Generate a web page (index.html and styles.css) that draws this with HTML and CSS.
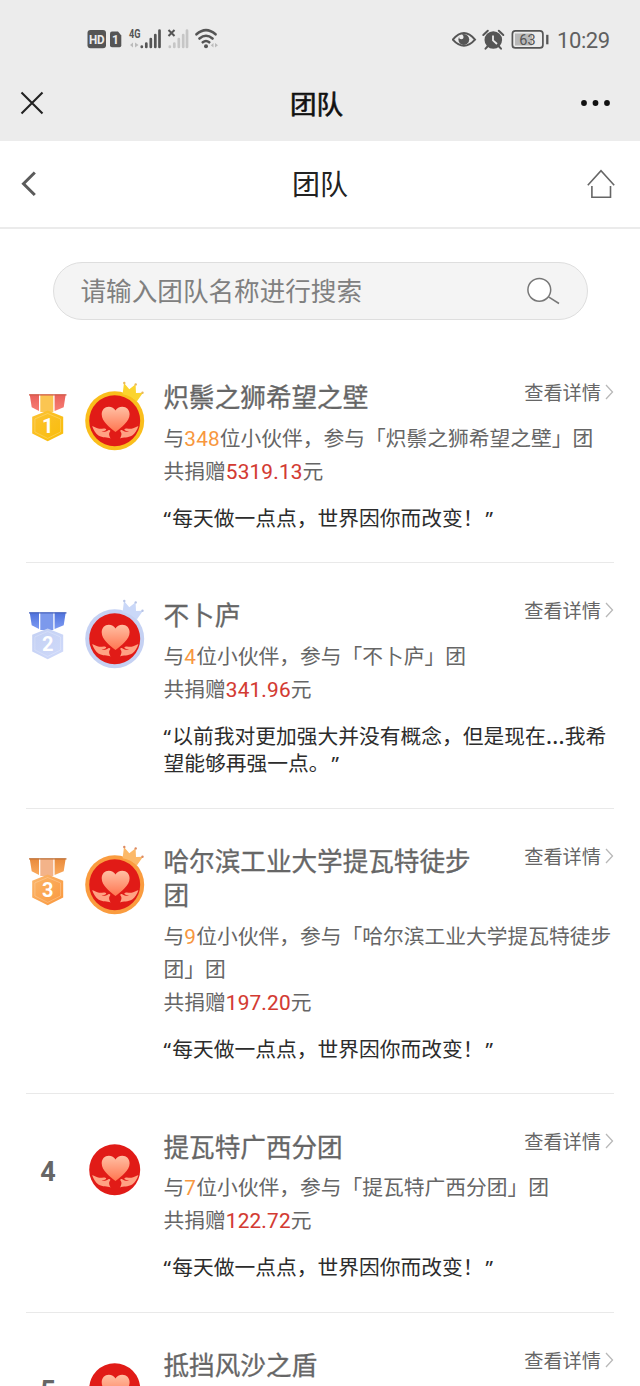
FILE: index.html
```html
<!DOCTYPE html>
<html lang="zh-CN">
<head>
<meta charset="utf-8">
<meta name="viewport" content="width=device-width">
<title>团队</title>
<link rel="stylesheet" href="styles.css">
</head>
<body>
<svg class="defs" width="0" height="0" aria-hidden="true">
  <defs>
    <linearGradient id="heartFill" x1="0" y1="0" x2="0" y2="1"><stop offset="0" stop-color="#ffc0a4"/><stop offset="1" stop-color="#ff7550"/></linearGradient>
    <linearGradient id="gold" x1="0" y1="0" x2="1" y2="1"><stop offset="0" stop-color="#fcc234"/><stop offset="1" stop-color="#f9bd08"/></linearGradient>
    <linearGradient id="silver" x1="0" y1="0" x2="1" y2="1"><stop offset="0" stop-color="#c3d0f3"/><stop offset="1" stop-color="#d0dafa"/></linearGradient>
    <linearGradient id="bronze" x1="0" y1="0" x2="1" y2="1"><stop offset="0" stop-color="#fbb66c"/><stop offset="1" stop-color="#fa983d"/></linearGradient>
    <linearGradient id="ribbon1" x1="0" y1="0" x2="0" y2="1"><stop offset="0" stop-color="#e9605a"/><stop offset="1" stop-color="#f77d74"/></linearGradient>
    <linearGradient id="ribbon2" x1="0" y1="0" x2="0" y2="1"><stop offset="0" stop-color="#4f72dc"/><stop offset="1" stop-color="#7d9af2"/></linearGradient>
    <linearGradient id="ribbon3" x1="0" y1="0" x2="0" y2="1"><stop offset="0" stop-color="#e88a3c"/><stop offset="1" stop-color="#fbaa5c"/></linearGradient>
    <g id="badge">
      <circle cx="30.700" cy="40.700" r="25.500" fill="#e11b17"/>
      <path d="M31.500 52C25.500 47.500 17.700 41.500 17.700 34.300C17.700 29.800 20.800 26.700 24.800 26.700C27.700 26.700 30.200 28.200 31.500 30.600C32.800 28.200 35.300 26.700 38.300 26.700C42.500 26.700 45.600 29.800 45.600 34.300C45.600 41.500 37.500 47.500 31.500 52Z" fill="url(#heartFill)"/>
      <path id="hand" d="M8.200 46.300C9.500 45.600 12.500 48.600 15.200 48.800C17.500 49 19.500 48.200 21.400 48.800C23 49.500 21.800 50.800 20.200 51L17.600 51.500C20 52.300 22.200 51.700 24 50.400C25.600 49.300 27 50.400 26 51.700C25 53 24.500 54.500 26.600 58.600C23.500 57 18.500 58 14.400 55.500C11.500 53.500 9.500 50 8.200 46.300Z" fill="#ffa283"/>
      <use href="#hand" transform="translate(62.600 0) scale(-1 1)"/>
    </g>
    <path id="crown" d="M38.600 14.200L40 3L45.300 9.300L51.600 4.200L52 13L59 12.800L52.800 21.500Q47 15.500 38.600 14.200Z"/>
    <path id="ribbonSide" d="M3.700 14.500H13V31L5.700 27.200ZM28.600 14.500H39.700L37.700 27.200L28.600 31Z"/>
    <path id="hex" d="M21.700 30.500L37.200 36.800V53.500L21.700 61.200L6.200 53.500V36.800Z"/>
    <path id="hexInner" d="M21.700 33.500L34.500 38.900V52L21.700 58.400L8.900 52V38.900Z" fill="none" stroke="#fff" stroke-opacity=".22"/>
  </defs>
</svg>

<header class="app-header">
  <div class="status-bar">
    <svg class="status-left" width="134" height="24" viewBox="86 27 134 24">
      <rect x="87.500" y="30" width="18.500" height="18.300" rx="3" fill="#555"/>
      <text x="88.900" y="43.800" class="hd" textLength="15.800" lengthAdjust="spacingAndGlyphs">HD</text>
      <path d="M112 31.500H118L121.300 35.500V45.500Q121.300 47.300 119.500 47.300H112Q110 47.300 110 45.500V33.500Q110 31.500 112 31.500Z" fill="#555"/>
      <text x="115.400" y="44" class="hd" text-anchor="middle">1</text>
      <text x="129" y="38" class="net" textLength="11.500" lengthAdjust="spacingAndGlyphs">4G</text>
      <path d="M133 42.500L130 45L133 47.500ZM135 42.500L138.500 45L135 47.500Z" fill="#bbb"/>
      <g stroke="#555" stroke-width="2.700" stroke-linecap="round"><path d="M141.800 46.500V47M146.300 43.500V47M150.800 39V47M155.300 35V47M159.500 30.500V47"/></g>
      <path d="M168.500 30L174.500 36M174.500 30L168.500 36" stroke="#555" stroke-width="2"/>
      <g stroke="#c6c6c6" stroke-width="2.700" stroke-linecap="round"><path d="M169.800 46.500V47M174.300 43.500V47M178.800 39V47M183.200 35V47M187 30.500V47"/></g>
      <g fill="none" stroke="#555" stroke-width="2.600" stroke-linecap="round"><path d="M196.500 34.300Q206 26 215.500 34.300M199.500 38.500Q206 33 212.500 38.500M202.800 42.300Q206 39.700 209.200 42.300"/></g>
      <circle cx="206" cy="46.200" r="2" fill="#555"/>
      <path d="M213.500 43L210.800 45.300L213.500 47.600ZM215 43L218 45.300L215 47.600Z" fill="#bbb"/>
    </svg>
    <div class="status-right">
      <svg width="98" height="24" viewBox="452 27 98 24">
        <path d="M452.800 39.700Q464 26.500 475 39.700Q464 52 452.800 39.700Z" fill="none" stroke="#555" stroke-width="2"/>
        <circle cx="463.800" cy="39.500" r="5.400" fill="#555"/><circle cx="461.300" cy="37" r="2.300" fill="#ececec"/>
        <circle cx="493.300" cy="40" r="8.800" fill="#555"/>
        <path d="M483.300 35L487.800 30.800M503.300 35L498.800 30.800M487.500 46.500L485.500 48.700M499 46.500L501 48.700" stroke="#555" stroke-width="2" stroke-linecap="round"/>
        <path d="M493 35.500V40.300L497 44" fill="none" stroke="#ececec" stroke-width="1.800"/>
        <rect x="512.400" y="30.900" width="30.500" height="17" rx="3" fill="none" stroke="#555" stroke-width="1.700"/>
        <rect x="515" y="33.500" width="17" height="12" fill="#b8b8b8"/>
        <text x="527.500" y="44.600" class="battery" text-anchor="middle">63</text>
        <path d="M547.300 34.800V44.300" stroke="#555" stroke-width="2.300"/>
      </svg>
      <span class="clock">10:29</span>
    </div>
  </div>
  <div class="title-bar">
    <svg class="close" width="24" height="24" viewBox="0 0 24 24"><path d="M1.500 1.500L22.500 22.500M22.500 1.500L1.500 22.500" stroke="#222" stroke-width="2.100"/></svg>
    <h1 class="app-title">团队</h1>
    <svg class="more" width="30" height="8" viewBox="0 0 30 8" fill="#111"><circle cx="3" cy="4" r="2.900"/><circle cx="14.500" cy="4" r="2.900"/><circle cx="26" cy="4" r="2.900"/></svg>
  </div>
</header>

<nav class="page-nav">
  <svg class="back" width="16" height="26" viewBox="0 0 16 26"><path d="M14.800 1.500L3.500 12.700L14.800 24" fill="none" stroke="#5b5b5b" stroke-width="3"/></svg>
  <h2 class="page-title">团队</h2>
  <svg class="home" width="28" height="32" viewBox="0 0 28 32" fill="none" stroke="#666" stroke-width="1.600"><path d="M.8 17.300L14 2.700L27.200 17.300M4.900 18V29.300H23.500V18"/></svg>
</nav>

<main>
  <div class="search">
    <span class="search-hint">请输入团队名称进行搜索</span>
    <svg width="34" height="28" viewBox="0 0 34 28" stroke="#777" stroke-width="1.500"><circle cx="13.300" cy="12.800" r="11.400" fill="#fff"/><path d="M22.500 19.800L33 26.500" fill="none"/></svg>
  </div>

  <ol class="teams">
    <li class="team">
      <svg class="medal" width="44" height="64" viewBox="0 0 44 64">
        <use href="#ribbonSide" fill="url(#ribbon1)"/><path d="M14.300 14.500H27.300V32H14.300Z" fill="#fbc552"/><path d="M3 14.800H40.500" stroke="#cf5a48" stroke-width="1.300"/>
        <use href="#hex" fill="url(#gold)"/><use href="#hexInner"/>
        <text x="21.700" y="53" class="medal-num" text-anchor="middle">1</text>
      </svg>
      <svg class="avatar" width="62" height="72" viewBox="0 0 62 72"><circle cx="30.700" cy="40.700" r="29.500" fill="#fabe1c"/><use href="#badge"/><use href="#crown" fill="#fbd42e"/><g fill="#e9b95a"><circle cx="40.300" cy="3" r="1.200"/><circle cx="51.700" cy="4.400" r="1.200"/><circle cx="58.500" cy="12.700" r="1.200"/></g></svg>
      <div class="info">
        <div class="head"><h3 class="name">炽鬃之狮希望之壁</h3><a class="detail">查看详情<svg width="9" height="18" viewBox="0 0 9 18"><path d="M1 1L7.500 8L1 15"/></svg></a></div>
        <p class="stats">与<span class="count">348</span>位小伙伴，参与「炽鬃之狮希望之壁」团<br>共捐赠<span class="money">5319.13</span>元</p>
        <p class="quote"><span class="open">“</span>每天做一点点，世界因你而改变！<span class="close-quote">”</span></p>
      </div>
    </li>
    <li class="team">
      <svg class="medal" width="44" height="64" viewBox="0 0 44 64">
        <use href="#ribbonSide" fill="url(#ribbon2)"/><path d="M14.300 14.500H27.300V32H14.300Z" fill="#7c99ec"/><path d="M3 14.800H40.500" stroke="#4964bd" stroke-width="1.300"/>
        <use href="#hex" fill="url(#silver)"/><use href="#hexInner"/>
        <text x="21.700" y="53" class="medal-num" text-anchor="middle">2</text>
      </svg>
      <svg class="avatar" width="62" height="72" viewBox="0 0 62 72"><circle cx="30.700" cy="40.700" r="29.500" fill="#c5d1f3"/><use href="#badge"/><use href="#crown" fill="#cad8f8"/><g fill="#b7c4e6"><circle cx="40.300" cy="3" r="1.200"/><circle cx="51.700" cy="4.400" r="1.200"/><circle cx="58.500" cy="12.700" r="1.200"/></g></svg>
      <div class="info">
        <div class="head"><h3 class="name">不卜庐</h3><a class="detail">查看详情<svg width="9" height="18" viewBox="0 0 9 18"><path d="M1 1L7.500 8L1 15"/></svg></a></div>
        <p class="stats">与<span class="count">4</span>位小伙伴，参与「不卜庐」团<br>共捐赠<span class="money">341.96</span>元</p>
        <p class="quote"><span class="open">“</span>以前我对更加强大并没有概念，但是现在<span class="dots">…</span>我希望能够再强一点。<span class="close-quote">”</span></p>
      </div>
    </li>
    <li class="team">
      <svg class="medal" width="44" height="64" viewBox="0 0 44 64">
        <use href="#ribbonSide" fill="url(#ribbon3)"/><path d="M14.300 14.500H27.300V32H14.300Z" fill="#f3b389"/><path d="M3 14.800H40.500" stroke="#bd7138" stroke-width="1.300"/>
        <use href="#hex" fill="url(#bronze)"/><use href="#hexInner"/>
        <text x="21.700" y="53" class="medal-num" text-anchor="middle">3</text>
      </svg>
      <svg class="avatar" width="62" height="72" viewBox="0 0 62 72"><circle cx="30.700" cy="40.700" r="29.500" fill="#fa9c3f"/><use href="#badge"/><use href="#crown" fill="#fcb968"/><g fill="#dc8a62"><circle cx="40.300" cy="3" r="1.200"/><circle cx="51.700" cy="4.400" r="1.200"/><circle cx="58.500" cy="12.700" r="1.200"/></g></svg>
      <div class="info">
        <div class="head"><h3 class="name">哈尔滨工业大学提瓦特徒步团</h3><a class="detail">查看详情<svg width="9" height="18" viewBox="0 0 9 18"><path d="M1 1L7.500 8L1 15"/></svg></a></div>
        <p class="stats">与<span class="count">9</span>位小伙伴，参与「哈尔滨工业大学提瓦特徒步团」团<br>共捐赠<span class="money">197.20</span>元</p>
        <p class="quote"><span class="open">“</span>每天做一点点，世界因你而改变！<span class="close-quote">”</span></p>
      </div>
    </li>
    <li class="team">
      <span class="rank">4</span>
      <svg class="avatar" width="62" height="72" viewBox="0 0 62 72"><use href="#badge"/></svg>
      <div class="info">
        <div class="head"><h3 class="name">提瓦特广西分团</h3><a class="detail">查看详情<svg width="9" height="18" viewBox="0 0 9 18"><path d="M1 1L7.500 8L1 15"/></svg></a></div>
        <p class="stats">与<span class="count">7</span>位小伙伴，参与「提瓦特广西分团」团<br>共捐赠<span class="money">122.72</span>元</p>
        <p class="quote"><span class="open">“</span>每天做一点点，世界因你而改变！<span class="close-quote">”</span></p>
      </div>
    </li>
    <li class="team">
      <span class="rank">5</span>
      <svg class="avatar" width="62" height="72" viewBox="0 0 62 72"><use href="#badge"/></svg>
      <div class="info">
        <div class="head"><h3 class="name">抵挡风沙之盾</h3><a class="detail">查看详情<svg width="9" height="18" viewBox="0 0 9 18"><path d="M1 1L7.500 8L1 15"/></svg></a></div>
      </div>
    </li>
  </ol>
</main>
</body>
</html>
```

FILE: styles.css
```css
* { box-sizing: border-box; }

html, body { height: 1386px; overflow: hidden; }

body {
  margin: 0;
  width: 640px;
  background: #fff;
  color: #666;
  font-family: "Noto Sans", "Noto Sans CJK SC", sans-serif;
  text-spacing-trim: space-all;
}

h1, h2, h3, p, ol { margin: 0; padding: 0; font-weight: 400; }

svg { display: block; flex: none; }
.defs { position: absolute; }

.app-header { height: 141px; background: #ececec; }

.status-bar {
  display: flex;
  justify-content: space-between;
  align-items: center;
  height: 78px;
  padding: 0 30px 0 86px;
}
.status-right { display: flex; align-items: center; gap: 7px; }
.clock { width: 53px; padding-top: 3px; font: 400 22px/24px Roboto, sans-serif; letter-spacing: -0.4px; color: #606060; white-space: nowrap; }
.hd { font: 700 12px Roboto, sans-serif; fill: #ececec; }
.net { font: 700 12px Roboto, sans-serif; fill: #555; }
.battery { font: 400 14.5px Roboto, sans-serif; fill: #555; }

.title-bar, .page-nav {
  display: grid;
  grid-template-columns: 60px 1fr 60px;
  align-items: center;
}
.title-bar { height: 50px; padding: 0 29px 0 20px; }
.app-title { padding: 2px 0 0 2px; font-size: 26.5px; line-height: 36px; color: #111; text-align: center; -webkit-text-stroke: .6px #111; }
.more { justify-self: end; }

.page-nav { height: 88px; padding: 0 25px 0 20px; border-bottom: 2px solid #ebebeb; }
.page-title { padding-left: 5px; font-size: 28px; line-height: 38px; color: #222; text-align: center; }
.home { justify-self: end; }

.search {
  display: flex;
  justify-content: space-between;
  align-items: center;
  width: 535px;
  height: 58px;
  margin: 33px 0 0 52.5px;
  padding: 0 27px;
  border: 1.5px solid #dedede;
  border-radius: 29px;
  background: #f4f4f4;
}
.search-hint { padding-top: 2px; font-size: 25.6px; line-height: 36px; color: #808080; }

.teams { list-style: none; margin: 24.5px 26px 0; }
.team {
  display: grid;
  grid-template-columns: 58px 79.5px 1fr;
  align-items: start;
  padding: 35px 0 30.2px;
  border-bottom: 1px solid #e9e9e9;
}
.rank { width: 44px; padding-top: 28px; font: 700 27px/30px Roboto, sans-serif; text-align: center; color: #666; }
.medal-num { font: 700 20px Roboto, sans-serif; fill: #fff; }

.head { display: flex; justify-content: space-between; align-items: flex-start; }
.name { max-width: 315px; padding-top: 1.5px; font-size: 25.6px; line-height: 34px; color: #666; -webkit-text-stroke: .3px #666; }
.detail { display: flex; align-items: center; gap: 4px; font-size: 19.2px; line-height: 26px; color: #666; white-space: nowrap; }
.detail path { fill: none; stroke: #b8b8b8; stroke-width: 1.3; }

.stats { margin-top: 6.5px; font-size: 20.76px; line-height: 33px; color: #666; }
.count, .money { font-family: Roboto, sans-serif; line-height: 0; letter-spacing: .2px; }
.count { color: #f7973f; }
.money { color: #d33a31; -webkit-text-stroke: .1px #d33a31; }

.quote { margin-top: 17px; font-size: 20.76px; line-height: 27.3px; color: #2c2c2c; }
.open { letter-spacing: 1.2px; }
.close-quote { margin-left: 2px; }
.dots { font-size: 24px; line-height: 0; }
```
